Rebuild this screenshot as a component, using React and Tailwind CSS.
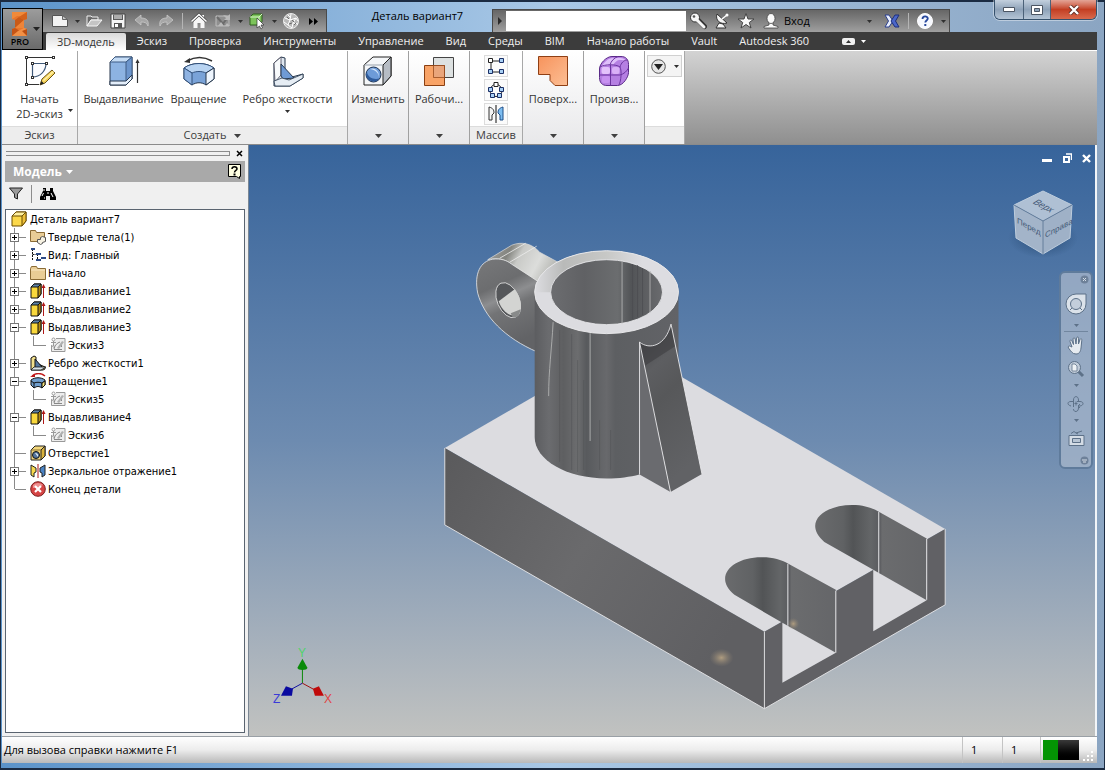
import { useState } from "react";

const Caret = ({ className = "fill-[#404040]" }) => (
  <svg width="7" height="4" viewBox="0 0 7 4" className={`shrink-0 ${className}`}>
    <path d="M0 0h7L3.5 4z" />
  </svg>
);

const SmallCaret = ({ className = "fill-[#303030]" }) => (
  <svg width="5" height="3" viewBox="0 0 5 3" className={`shrink-0 ${className}`}>
    <path d="M0 0h5L2.5 3z" />
  </svg>
);

/* ---------- application button ---------- */

const AppLogo = () => (
  <svg width="18" height="26" viewBox="0 0 18 26">
    <path d="M1 1h15v7l-3 1v8l3 1v7H1v-7l3-1V9L1 8z" fill="#e8762c" />
    <path d="M1 1h15l-6 4H6L1 8z" fill="#f08a3a" />
    <path d="M16 1v7l-3 1-5-3z" fill="#d4621c" />
    <path d="M4 9l4-3 5 3-9 8z" fill="#c95a18" />
    <path d="M13 9v8H4z" fill="#ee8438" />
    <path d="M1 25v-7l3-1 5 3z" fill="#c65516" />
    <path d="M16 25v-7l-3-1-6 3-6 5z" fill="#f29045" />
    <path d="M16 25v-7l-5 2z" fill="#bb4f12" />
  </svg>
);

/* ---------- quick access icons, 18 x 18 ---------- */

const NewIcon = () => (
  <svg width="18" height="18" viewBox="0 0 18 18">
    <path d="M1.500 3.500h10l5 4v7h-15z" fill="#f2f2f2" stroke="#555" />
    <path d="M11.500 3.500v4h5z" fill="#c9c9c9" stroke="#666" />
  </svg>
);
const OpenIcon = () => (
  <svg width="18" height="18" viewBox="0 0 18 18">
    <path d="M2 14V4h4l1 1h6v3H6z" fill="#6b6b6b" stroke="#f0f0f0" strokeLinejoin="round" />
    <path d="M2 14l4-6h11l-5 6z" fill="#c4c4c4" stroke="#f5f5f5" strokeLinejoin="round" />
  </svg>
);
const SaveIcon = () => (
  <svg width="18" height="18" viewBox="0 0 18 18">
    <path d="M2 2h14v14H2z" fill="#f5f5f5" stroke="#444" />
    <path d="M4 2.500h10v5.500H4z" fill="#5a5a5a" />
    <path d="M5 4h8M5 6h8" stroke="#fff" />
    <path d="M5 11h8v5H5z" fill="#555" />
    <path d="M6 12h3v3H6z" fill="#fff" />
  </svg>
);
const UndoIcon = () => (
  <svg width="18" height="18" viewBox="0 0 18 18">
    <path d="M2 8l6-5v3c6 0 8 3 7 8-1-3-3-4-7-4v3z" fill="#a6a6a6" stroke="#c9c9c9" strokeWidth=".8" />
  </svg>
);
const RedoIcon = () => (
  <svg width="18" height="18" viewBox="0 0 18 18">
    <path d="M16 8l-6-5v3c-6 0-8 3-7 8 1-3 3-4 7-4v3z" fill="#a6a6a6" stroke="#c9c9c9" strokeWidth=".8" />
  </svg>
);
const HomeIcon = () => (
  <svg width="18" height="18" viewBox="0 0 18 18">
    <path d="M12 3h2v4h-2z" fill="#fff" />
    <path d="M3.500 9v7h4v-5h3v5h4V9L9 4z" fill="#f7f7f7" />
    <path d="M1.500 9.500L9 2.500l7.500 7" fill="none" stroke="#444" strokeWidth="3" />
    <path d="M1.500 9.500L9 2.500l7.500 7" fill="none" stroke="#fff" strokeWidth="1.600" />
  </svg>
);
const UpdateIcon = () => (
  <svg width="18" height="18" viewBox="0 0 18 18">
    <path d="M2 4h13v10H2z" fill="#8f8f8f" stroke="#bdbdbd" />
    <path d="M3 5l7 8M14 5l-6 8" stroke="#6c6c6c" strokeWidth="2" />
    <path d="M9 3l3 3-2 2h6V2l-2 2z" fill="#b9b9b9" />
    <path d="M4 14l3-4 3 4zM11 14l2-3 3 3z" fill="#bbb" />
  </svg>
);
const SelectIcon = () => (
  <svg width="18" height="18" viewBox="0 0 18 18">
    <path d="M2 5l3-3h9v8l-3 3H2z" fill="#7cc35a" stroke="#2f5c1f" />
    <path d="M2 5h9v8M11 5l3-3" fill="none" stroke="#d8f5c8" />
    <path d="M9 6v10l2.500-2 1.500 3 1.500-1-1.500-3h3z" fill="#fff" stroke="#333" strokeWidth=".7" />
  </svg>
);
const MaterialIcon = () => (
  <svg width="18" height="18" viewBox="0 0 18 18">
    <circle cx="9" cy="9" r="7.500" fill="#b9b9b9" stroke="#ececec" />
    <path d="M3 6l5 2 1-6M8 8l-2 5 4 3M8 8l6-2M6 13l-4-3M10 16l1-5 5 1M11 11l3-5 2 3M6 3l3 3" fill="none" stroke="#fff" />
    <path d="M5 5l2 2M10 8l2 2M7 12l3-1M12 13l2-2" stroke="#6c6c6c" />
  </svg>
);

/* ---------- info center icons ---------- */

const KeyIcon = () => (
  <svg width="18" height="18" viewBox="0 0 18 18">
    <path d="M8.500 7.500l7 7" stroke="#333" strokeWidth="5" strokeLinecap="round" />
    <circle cx="6" cy="5.500" r="4.500" fill="#f6f6f6" stroke="#333" />
    <path d="M8 8l7 7" stroke="#f6f6f6" strokeWidth="3" strokeLinecap="round" />
    <circle cx="5" cy="4.500" r="1.300" fill="#555" />
  </svg>
);
const DishIcon = () => (
  <svg width="18" height="18" viewBox="0 0 18 18">
    <path d="M4 2c-2 6 3 11 10 9z" fill="#f6f6f6" stroke="#333" />
    <path d="M9 7l5-4" stroke="#fff" strokeWidth="1.500" />
    <circle cx="14" cy="3" r="1.500" fill="#fff" />
    <path d="M6 11l-3 5h10l-3-4z" fill="#f6f6f6" stroke="#333" />
  </svg>
);
const StarIcon = () => (
  <svg width="18" height="18" viewBox="0 0 18 18">
    <path d="M9 1.500l2 5.500h6l-4.700 3.500L14 16l-5-3.500L4 16l1.700-5.500L1 7h6z" fill="#fafafa" stroke="#444" />
  </svg>
);
const UserIcon = () => (
  <svg width="18" height="18" viewBox="0 0 18 18">
    <path d="M7 10h4v3l5 1.500V16H2v-1.500L7 13z" fill="#fafafa" stroke="#444" strokeWidth=".8" />
    <ellipse cx="9" cy="6.500" rx="4" ry="5" fill="#fafafa" stroke="#444" strokeWidth=".8" />
  </svg>
);
const ExchangeIcon = () => (
  <svg width="18" height="18" viewBox="0 0 18 18">
    <path d="M2 3h4l4 6-4 6H2l3.500-6z" fill="#e8eefc" stroke="#2b3f8f" />
    <path d="M16 3h-4L8 9l4 6h4l-3.500-6z" fill="#4a66c9" stroke="#1d2f7c" />
  </svg>
);
const HelpIcon = () => (
  <svg width="18" height="18" viewBox="0 0 18 18">
    <circle cx="9" cy="9" r="7.500" fill="#f7f9ff" stroke="#fff" />
    <path d="M6.500 7c0-3.500 5.300-3.300 5.300-.4 0 1.900-2.500 2-2.500 4" fill="none" stroke="#27489c" strokeWidth="1.800" />
    <path d="M8.300 12h2v2h-2z" fill="#27489c" />
  </svg>
);

/* ---------- ribbon icons, 32 x 32 ---------- */

const SketchIcon = () => (
  <svg width="32" height="32" viewBox="0 0 32 32">
    <path d="M2.500 2.500h27M2.500 2.500v27H15" fill="none" stroke="#333" />
    <path d="M8.500 22V8.500H22C22 16 16 22 8.500 22z" fill="#fbfcff" stroke="#3e5878" strokeWidth="1.200" />
    <path d="M1 1h3v3H1zM28 1h3v3h-3zM1 28h3v3H1zM7 7h3v3H7zM21 7h3v3h-3zM7 21h3v3H7z" fill="#333" />
    <path d="M2 2h1v1H2zM29 2h1v1h-1zM2 29h1v1H2zM8 8h1v1H8zM22 8h1v1h-1zM8 22h1v1H8z" fill="#fff" />
    <path d="M16 30l2-6L28 15l3 3-10 10z" fill="#f5d35a" stroke="#6b5518" />
    <path d="M19.500 25.500l10-9" stroke="#fff0a8" strokeWidth="1.500" />
    <path d="M16 30l1.500-4 2.500 2.500z" fill="#222" />
  </svg>
);
const ExtrudeIcon = () => (
  <svg width="32" height="32" viewBox="0 0 32 32">
    <path d="M2 7l5-5h17v22l-6 6H2z" fill="#8db3e2" stroke="#26374d" strokeLinejoin="round" />
    <path d="M2 7l5-5h17l-6 5z" fill="#c5dcf5" stroke="#3e5d85" />
    <path d="M18 7v23l6-6V2z" fill="#6c95cc" stroke="#3e5d85" />
    <path d="M2 26h16l6-6v4l-6 6H2z" fill="#e4eefa" stroke="#26374d" strokeLinejoin="round" />
    <path d="M29.500 6v22" stroke="#333" strokeWidth="1.200" />
    <path d="M29.500 4l-2 4h4z" fill="#333" />
  </svg>
);
const RevolveIcon = () => (
  <svg width="32" height="32" viewBox="0 0 32 32">
    <path d="M4 6c8-4.500 17-4.500 25 0" fill="none" stroke="#333" strokeWidth="1.500" />
    <path d="M1 7l6-4v5z" fill="#333" />
    <path d="M1 13c8-6 22-6 30 0v11l-8 6c-4-3-10-3-14 0l-8-6z" fill="#7aa3d8" stroke="#26374d" strokeLinejoin="round" />
    <path d="M1 13c8-6 22-6 30 0l-8 5c-4-2-10-2-14 0z" fill="#b9d4f2" stroke="#33527d" />
    <path d="M23 18l8-5v11l-8 6z" fill="#eef5fd" stroke="#26374d" />
    <path d="M1 13l8 5v12l-8-6z" fill="#8fb3e2" stroke="#33527d" />
  </svg>
);
const RibIcon = () => (
  <svg width="32" height="32" viewBox="0 0 32 32">
    <path d="M2 8l7-6 4 1v15l7 4 11-3v4l-13 8H2z" fill="#dfe7f0" stroke="#26374d" strokeLinejoin="round" />
    <path d="M2 8l7-6v18l-6 7z" fill="#f8fafc" stroke="#445" strokeWidth=".8" />
    <path d="M9 9l13 14-11 1-2-3z" fill="#6f9bd6" stroke="#26374d" />
    <path d="M2 26l8-3 7 2 14-6v4l-13 8H3z" fill="#e6edf4" stroke="#26374d" strokeWidth=".8" />
  </svg>
);
const ModifyIcon = () => (
  <svg width="32" height="32" viewBox="0 0 32 32">
    <path d="M2 10l9-8h18v19l-8 9H2z" fill="#f4f6f8" stroke="#222" strokeLinejoin="round" />
    <path d="M21 10l8-8v19l-8 9z" fill="#b6bcc4" stroke="#222" strokeLinejoin="round" />
    <path d="M2 10h19" stroke="#9aa3ad" />
    <circle cx="11.500" cy="19.500" r="7.500" fill="#6d9bd8" stroke="#1e3250" />
    <path d="M5 17c1 6 7 8 12.500 6.500A7.500 7.500 0 0 1 4 19z" fill="#2f5c9c" />
    <path d="M8 14a6.500 6.500 0 0 1 8 9c2-4-2-8-8-9z" fill="#cfe3fa" />
  </svg>
);
const WorkPlaneIcon = () => (
  <svg width="32" height="32" viewBox="0 0 32 32">
    <path d="M10.500 2.500h20v20h-20z" fill="#dde1e1" stroke="#444" />
    <path d="M1.500 10.500h20v20h-20z" fill="#f8a367" stroke="#8a3f12" />
    <path d="M10.500 10.500h11v12h-11z" fill="#e9a57b" stroke="#8a3f12" strokeOpacity=".7" />
  </svg>
);
const SurfaceIcon = () => (
  <svg width="32" height="32" viewBox="0 0 32 32">
    <defs>
      <linearGradient id="surf" x2="1" y2="1">
        <stop stopColor="#f7935c" />
        <stop offset="1" stopColor="#fcbf95" />
      </linearGradient>
    </defs>
    <path d="M1.500 1.500h29v29H18l-5-5v-6H1.500z" fill="url(#surf)" stroke="#8f3f14" />
  </svg>
);
const FreeformIcon = () => (
  <svg width="32" height="32" viewBox="0 0 32 32">
    <path d="M1.500 14C1.500 9 8 1.500 14 1.500h9c5 0 7.500 3 7.500 8v8c0 4-5 13-11 13H9c-5 0-7.500-3-7.500-8z" fill="#b57fe2" stroke="#5a2b87" />
    <path d="M3 13c2-5 7-10 12-10h7c3 0 5 1 6 3-2-1-4-1-6-1-3 0-5 2-7 5-4 0-9 0-12 3z" fill="#dfc0fa" />
    <rect x="3.500" y="12" width="8.500" height="7" rx="2" fill="#e3c2fb" />
    <rect x="14" y="12" width="7.500" height="7" rx="2" fill="#d9b0f7" />
    <rect x="4" y="21" width="8" height="7" rx="2" fill="#c791f0" />
    <path d="M2 12c5-3 16-3 20 0 2 4 1 14-1 18M12.500 10v20.500M2 20h20c4-1 7-4 8.500-7M12 10c1-4 4-7 8-8.500M22 12c1-4 4-7 7-7" fill="none" stroke="#6d35a0" />
  </svg>
);

/* ---------- pattern icons, 20 x 20 ---------- */

const RectPatternIcon = () => (
  <svg width="20" height="20" viewBox="0 0 20 20">
    <path d="M5 5h11M5 5v11h11" fill="none" stroke="#222" />
    <path d="M2.500 2.500h4v4h-4z" fill="#fff" stroke="#222" />
    <path d="M13.500 2.500h4v4h-4zM2.500 13.500h4v4h-4zM13.500 13.500h4v4h-4z" fill="#a8d0f5" stroke="#1b2f66" />
  </svg>
);
const CircPatternIcon = () => (
  <svg width="20" height="20" viewBox="0 0 20 20">
    <circle cx="10" cy="10.500" r="6" fill="none" stroke="#222" />
    <path d="M8 2.500h4v4H8z" fill="#fff" stroke="#222" />
    <path d="M2.500 7.500h4v4h-4zM13.500 7.500h4v4h-4zM4.500 13.500h4v4h-4zM11.500 13.500h4v4h-4z" fill="#a8d0f5" stroke="#1b2f66" />
  </svg>
);
const MirrorIcon = () => (
  <svg width="20" height="20" viewBox="0 0 20 20">
    <path d="M3 3c4 1 5 3 5 6l-2 2v5H3z" fill="#f4f4f4" stroke="#333" />
    <path d="M17 3c-4 1-5 3-5 6l2 2v5h3z" fill="#7dbdf0" stroke="#1f4e88" />
    <path d="M10 1v18" stroke="#111" />
  </svg>
);

/* ---------- browser tree icons, 16 x 16 ---------- */

const PartIcon = () => (
  <svg width="16" height="16" viewBox="0 0 16 16">
    <path d="M1 5l4-4h10v9l-4 5H1z" fill="#fbd84a" stroke="#6b4d00" strokeLinejoin="round" />
    <path d="M1 5l4-4h10l-4 4z" fill="#fff0a0" stroke="#6b4d00" strokeLinejoin="round" />
    <path d="M11 5l4-4v9l-4 5z" fill="#eec03a" stroke="#6b4d00" strokeLinejoin="round" />
  </svg>
);
const BodiesIcon = () => (
  <svg width="16" height="16" viewBox="0 0 16 16">
    <path d="M.5 12.500v-11h5l1 2h8v9z" fill="#e9cd96" stroke="#8a6b35" />
    <path d="M7.500 13.500v-3h3v-2l2-1 3 1v4l-3 1v1l-2 1z" fill="#f6f1e2" stroke="#555" />
  </svg>
);
const ViewIcon = () => (
  <svg width="16" height="16" viewBox="0 0 16 16">
    <path d="M2.500 2v12M2.500 7.500H7M7.500 7v6h3" fill="none" stroke="#111" strokeDasharray="2 1" />
    <path d="M1 1h4v2H1zM6 6h5v2H6zM11 10h5v2h-5zM6 12h5v2H6z" fill="#2c4a86" />
  </svg>
);
const FolderIcon = () => (
  <svg width="16" height="16" viewBox="0 0 16 16">
    <path d="M.5 3.500l1-2h5l1 2h8v11H.5z" fill="#e9cd96" stroke="#8a6b35" />
    <path d="M1 5h14" stroke="#f9e8c2" />
  </svg>
);
const ExtrusionIcon = () => (
  <svg width="16" height="16" viewBox="0 0 16 16">
    <path d="M1 4l3-3h7v10l-3 4H1z" fill="#f9d83c" stroke="#111" strokeLinejoin="round" />
    <path d="M1 4l3-3h7L8 4z" fill="#5d84a8" stroke="#111" strokeLinejoin="round" />
    <path d="M8 4l3-3v10l-3 4z" fill="#b48c12" stroke="#111" strokeLinejoin="round" />
    <path d="M13.500 4v11" stroke="#b01818" />
    <path d="M13.500 1l-2 4h4z" fill="#b01818" />
  </svg>
);
const RibSmallIcon = () => (
  <svg width="16" height="16" viewBox="0 0 16 16">
    <path d="M1 3l3-2 2 1v6l9 4v2l-2 1H1z" fill="#f2e08c" stroke="#111" strokeLinejoin="round" />
    <path d="M5 4l8 9H5z" fill="#54769e" stroke="#111" />
    <path d="M1 15l3-3h12l-5 3z" fill="#d7e3ea" stroke="#111" strokeWidth=".8" />
  </svg>
);
const RevolutionIcon = () => (
  <svg width="16" height="16" viewBox="0 0 16 16">
    <path d="M2 3c4-3 9-3 13 0" fill="none" stroke="#c01818" strokeWidth="1.500" />
    <path d="M0 4l5-3v3z" fill="#c01818" />
    <path d="M1 7c4-3 10-3 14 0v5l-3 3c-3-2-5-2-8 0l-3-3z" fill="#6f9dcc" stroke="#111" />
    <path d="M1 8l3 2c3-1 5-1 8 0l3-2M12 10v5M4 10v5" fill="none" stroke="#111" />
    <path d="M12 10l3-2v4l-3 3z" fill="#f4e27a" stroke="#111" />
  </svg>
);
const HoleIcon = () => (
  <svg width="16" height="16" viewBox="0 0 16 16">
    <path d="M1 5l4-4h10v10l-4 4H1z" fill="#f3d77b" stroke="#222" strokeLinejoin="round" />
    <path d="M11 5l4-4v10l-4 4z" fill="#d9b23c" stroke="#222" strokeLinejoin="round" />
    <path d="M1 5h10" stroke="#8d7434" />
    <circle cx="6" cy="10" r="3.500" fill="#54769e" stroke="#111" />
    <path d="M5 8a3 3 0 0 1 3 4z" fill="#e5eff6" />
  </svg>
);
const MirrorSmallIcon = () => (
  <svg width="16" height="16" viewBox="0 0 16 16">
    <path d="M1 2l5 3v4l-2 1v4l-3-2z" fill="#f7d94d" stroke="#222" />
    <path d="M15 2l-5 3v4l2 1v4l3-2z" fill="#4b83c4" stroke="#222" />
    <path d="M8 1v14" stroke="#b01818" />
  </svg>
);
const EndIcon = () => (
  <svg width="16" height="16" viewBox="0 0 16 16">
    <circle cx="8" cy="8" r="7.300" fill="#d64545" stroke="#7c1f1f" />
    <path d="M3 4a7 7 0 0 1 10 0c-3 2-7 3-10 3z" fill="#ee9090" />
    <path d="M5 5l6 6M11 5l-6 6" stroke="#fff" strokeWidth="2.200" />
  </svg>
);
const SketchSmallIcon = () => (
  <svg width="16" height="16" viewBox="0 0 16 16">
    <path d="M6 1.500h9v13H1.500V9" fill="#ededed" stroke="#999" />
    <path d="M4 12.500h8M11.500 6v4M4 12c1-4 3-6 6-7" fill="none" stroke="#888" />
    <circle cx="3.500" cy="2.500" r="1.500" fill="#fff" stroke="#999" />
    <path d="M3.500 4v5M1 5.500h5M1 8l2.500 2L6 8" fill="none" stroke="#999" />
    <path d="M7 11l5-7 2 1-5 7z" fill="#b0b0b0" />
  </svg>
);

/* ---------- data ---------- */

const tabs = [
  "3D-модель", "Эскиз", "Проверка", "Инструменты", "Управление", "Вид",
  "Среды", "BIM", "Начало работы", "Vault", "Autodesk 360",
];

const treeItems = [
  { label: "Твердые тела(1)", icon: BodiesIcon, toggle: "+" },
  { label: "Вид: Главный", icon: ViewIcon, toggle: "+" },
  { label: "Начало", icon: FolderIcon, toggle: "+" },
  { label: "Выдавливание1", icon: ExtrusionIcon, toggle: "+" },
  { label: "Выдавливание2", icon: ExtrusionIcon, toggle: "+" },
  { label: "Выдавливание3", icon: ExtrusionIcon, toggle: "-", child: "Эскиз3" },
  { label: "Ребро жесткости1", icon: RibSmallIcon, toggle: "+" },
  { label: "Вращение1", icon: RevolutionIcon, toggle: "-", child: "Эскиз5" },
  { label: "Выдавливание4", icon: ExtrusionIcon, toggle: "-", child: "Эскиз6" },
  { label: "Отверстие1", icon: HoleIcon },
  { label: "Зеркальное отражение1", icon: MirrorSmallIcon, toggle: "+" },
  { label: "Конец детали", icon: EndIcon, last: true },
];

/* ---------- title bar ---------- */

const ToolButton = ({ label, children }) => (
  <button type="button" aria-label={label} className="flex h-5 w-6 shrink-0 items-center justify-center">
    {children}
  </button>
);

const QuickAccess = () => (
  <div className="flex h-[23px] w-[284px] shrink-0 items-center self-end border-t border-r border-[#4a4a4a] bg-gradient-to-b from-[#666] to-[#a0a0a0] pl-[5px]">
    <ToolButton label="Создать"><NewIcon /></ToolButton>
    <div className="flex w-[10px] justify-center"><SmallCaret /></div>
    <ToolButton label="Открыть"><OpenIcon /></ToolButton>
    <ToolButton label="Сохранить"><SaveIcon /></ToolButton>
    <ToolButton label="Отменить"><UndoIcon /></ToolButton>
    <ToolButton label="Вернуть"><RedoIcon /></ToolButton>
    <div className="mx-1 h-4 w-px bg-[#b5b5b5]" />
    <ToolButton label="Домой"><HomeIcon /></ToolButton>
    <ToolButton label="Обновить"><UpdateIcon /></ToolButton>
    <div className="flex w-[10px] justify-center"><SmallCaret /></div>
    <ToolButton label="Выбор"><SelectIcon /></ToolButton>
    <div className="flex w-[10px] justify-center"><SmallCaret /></div>
    <ToolButton label="Материал"><MaterialIcon /></ToolButton>
    <button type="button" aria-label="Ещё" className="flex h-5 w-5 items-center justify-center">
      <svg width="9" height="7" viewBox="0 0 9 7" className="fill-black">
        <path d="M0 0l4 3.500L0 7zM5 0l4 3.500L5 7z" />
      </svg>
    </button>
  </div>
);

const InfoCenter = () => (
  <div className="flex h-[23px] w-[458px] shrink-0 items-center self-end border-t border-r border-[#4a4a4a] bg-gradient-to-b from-[#666] to-[#a0a0a0]">
    <button type="button" aria-label="Свернуть" className="flex h-full w-3.5 items-center justify-center border-l border-[#4a4a4a]">
      <svg width="4" height="8" viewBox="0 0 4 8" className="fill-[#2b2b2b]"><path d="M0 0l4 4-4 4z" /></svg>
    </button>
    <input type="text" aria-label="Поиск" className="h-5 w-[180px] bg-white px-1 text-[11px] outline-none" />
    <ToolButton label="Ключ"><KeyIcon /></ToolButton>
    <ToolButton label="Связь"><DishIcon /></ToolButton>
    <ToolButton label="Избранное"><StarIcon /></ToolButton>
    <button type="button" className="flex items-center gap-1 pl-1 text-[11px] text-black">
      <UserIcon />
      Вход
    </button>
    <div className="ml-auto flex items-center">
      <SmallCaret />
      <div className="w-2" />
      <ToolButton label="Exchange"><ExchangeIcon /></ToolButton>
      <div className="mx-1 h-4 w-px bg-[#b5b5b5]" />
      <ToolButton label="Справка"><HelpIcon /></ToolButton>
      <div className="flex w-3 justify-center"><SmallCaret /></div>
    </div>
  </div>
);

const WindowButtons = () => (
  <div className="flex h-5 shrink-0 self-start overflow-hidden rounded-b-md border border-t-0 border-[#35506b] shadow-[0_0_0_1px_rgba(255,255,255,0.4)]">
    <button type="button" aria-label="Свернуть окно" className="flex w-7 items-center justify-center bg-gradient-to-b from-[#c3d0de] via-[#8ea2b8] to-[#b5c5d6]">
      <svg width="12" height="5" viewBox="0 0 12 5"><path d="M.5 .5h11v4H.5z" fill="#fff" stroke="#4b5563" /></svg>
    </button>
    <button type="button" aria-label="Развернуть окно" className="flex w-7 items-center justify-center border-x border-[#4b6178] bg-gradient-to-b from-[#c3d0de] via-[#8ea2b8] to-[#b5c5d6]">
      <svg width="12" height="10" viewBox="0 0 12 10">
        <path d="M.5 .5h11v9H.5z" fill="#fff" stroke="#4b5563" />
        <path d="M3.500 3.500h5v3h-5z" fill="#8ea2b8" stroke="#4b5563" />
      </svg>
    </button>
    <button type="button" aria-label="Закрыть окно" className="flex w-[45px] items-center justify-center bg-gradient-to-b from-[#e3a496] via-[#c33e22] to-[#d9694c]">
      <svg width="12" height="10" viewBox="0 0 12 10">
        <path d="M2 1l8 8M10 1L2 9" stroke="#5b2a22" strokeWidth="4" />
        <path d="M2 1l8 8M10 1L2 9" stroke="#fff" strokeWidth="2.400" />
      </svg>
    </button>
  </div>
);

const Header = ({ active, setActive }) => (
  <header className="flex h-[50px] shrink-0">
    <button type="button" className="mt-2 ml-px flex w-[41px] shrink-0 items-center border border-black bg-gradient-to-b from-[#9c9c9c] to-[#6b6b6b]">
      <span className="flex w-[30px] flex-col items-center pl-1">
        <AppLogo />
        <span className="text-[9px] leading-[10px] font-semibold text-black">PRO</span>
      </span>
      <Caret className="fill-[#222]" />
    </button>
    <div className="flex min-w-0 flex-1 flex-col">
      <div className="flex h-8 items-stretch">
        <QuickAccess />
        <div className="flex-1 truncate pt-[7px] pl-4 text-center text-[11px] leading-[18px] text-black">Деталь вариант7</div>
        <InfoCenter />
        <div className="w-11 shrink-0" />
        <WindowButtons />
        <div className="w-[7px] shrink-0" />
      </div>
      <div className="mr-[7px] flex h-[18px] items-center bg-[#3c3c3c] pl-[3px]">
        <nav className="flex h-full">
          {tabs.map((tab) => (
            <button
              key={tab}
              type="button"
              onClick={() => setActive(tab)}
              className={
                tab === active
                  ? "mt-px rounded-t-xs bg-gradient-to-b from-[#d9d9d9] to-white px-[11px] text-[11px] leading-4 whitespace-nowrap text-[#333]"
                  : "px-[11px] text-[11px] leading-[18px] whitespace-nowrap text-[#f0f0f0]"
              }
            >
              {tab}
            </button>
          ))}
        </nav>
        <button type="button" aria-label="Свернуть ленту" className="ml-[22px] flex items-center gap-1.5">
          <svg width="13" height="7" viewBox="0 0 13 7">
            <rect width="13" height="7" rx="2" fill="#f0f0f0" />
            <path d="M4 5h5L6.500 2z" fill="#333" />
          </svg>
          <SmallCaret className="fill-white" />
        </button>
      </div>
    </div>
  </header>
);

/* ---------- ribbon ---------- */

const RibbonPanel = ({ title, className, children }) => (
  <section className={`flex shrink-0 flex-col border-r border-[#a8a8a8] bg-white ${className}`}>
    <div className="flex flex-1 justify-center pt-1">{children}</div>
    <div className="flex h-[18px] items-center justify-center gap-2 border-t border-[#dcdcdc] bg-[#ededed] text-[11px] text-[#3c3c3c]">{title}</div>
  </section>
);

const RibbonButton = ({ icon: Icon, label, caret, className }) => (
  <button type="button" className={`flex flex-col items-center gap-1 text-[11px] leading-[15px] whitespace-nowrap text-[#333] ${className}`}>
    <Icon />
    <span>{label}</span>
    {caret && <SmallCaret />}
  </button>
);

const CollapsedPanel = ({ icon, label }) => (
  <section className="flex w-[61px] shrink-0 flex-col items-center justify-between border-r border-[#a0a0a0] bg-gradient-to-b from-white to-[#e8e8ea] pt-1 pb-1.5">
    <RibbonButton icon={icon} label={label} />
    <Caret />
  </section>
);

const Ribbon = () => (
  <div className="mr-[7px] ml-px flex h-[95px] shrink-0 border-t border-b border-[#8b8b8b] border-t-white bg-gradient-to-b from-[#d3d3d3] to-[#8f8f8f]">
    <RibbonPanel title="Эскиз" className="w-[76px]">
      <button type="button" className="relative flex w-full flex-col items-center gap-1 text-[11px] leading-[15px] text-[#333]">
        <SketchIcon />
        <span>Начать<br />2D-эскиз</span>
        <span className="absolute right-1 bottom-3.5"><SmallCaret /></span>
      </button>
    </RibbonPanel>
    <RibbonPanel title={<>Создать <Caret /></>} className="w-[270px]">
      <RibbonButton icon={ExtrudeIcon} label="Выдавливание" className="w-[86px]" />
      <RibbonButton icon={RevolveIcon} label="Вращение" className="w-16" />
      <RibbonButton icon={RibIcon} label="Ребро жесткости" caret className="w-[114px]" />
    </RibbonPanel>
    <CollapsedPanel icon={ModifyIcon} label="Изменить" />
    <CollapsedPanel icon={WorkPlaneIcon} label="Рабочи..." />
    <RibbonPanel title="Массив" className="w-[53px]">
      <div className="flex flex-col gap-0.5">
        {[RectPatternIcon, CircPatternIcon, MirrorIcon].map((Icon, i) => (
          <button key={i} type="button" aria-label={`Массив ${i + 1}`} className="flex h-[22px] w-6 items-center justify-center border border-[#dcdcdc] bg-[#fbfbfb]">
            <Icon />
          </button>
        ))}
      </div>
    </RibbonPanel>
    <CollapsedPanel icon={SurfaceIcon} label="Поверх..." />
    <CollapsedPanel icon={FreeformIcon} label="Произв..." />
    <RibbonPanel title="" className="w-10">
      <button type="button" aria-label="Параметры" className="flex h-[22px] w-[35px] items-center justify-center gap-2 border border-[#d0d0d0] bg-[#f4f4f4]">
        <svg width="15" height="15" viewBox="0 0 15 15">
          <circle cx="7.500" cy="7.500" r="6.800" fill="#e6e6e6" stroke="#555" />
          <path d="M3 5h9l-4.500 6z" fill="#222" />
        </svg>
        <SmallCaret />
      </button>
    </RibbonPanel>
  </div>
);

/* ---------- model browser ---------- */

const Branch = ({ toggle, last }) => (
  <svg width="24" height="18" viewBox="0 0 24 18" className="shrink-0" shapeRendering="crispEdges">
    <path d={last ? "M8.500 0v9" : "M8.500 0v18"} stroke="#8a8a8a" fill="none" />
    <path d="M8.500 9.500h11" stroke="#8a8a8a" />
    {toggle && <path d="M4.500 5.500h8v8h-8z" fill="#fff" stroke="#777" />}
    {toggle && <path d="M6 9.500h5" stroke="#000" />}
    {toggle === "+" && <path d="M8.500 7v5" stroke="#000" />}
  </svg>
);

const ChildBranch = () => (
  <svg width="44" height="18" viewBox="0 0 44 18" className="shrink-0" shapeRendering="crispEdges">
    <path d="M8.500 0v18M27.500 0v9.500h12" fill="none" stroke="#8a8a8a" />
  </svg>
);

const ModelBrowser = () => (
  <aside className="flex w-[247px] shrink-0 flex-col border-r border-[#7b8794] bg-[#f0f0f0] px-[3px] pb-[3px]">
    <div className="flex h-4 items-center gap-1.5 pl-px">
      <div className="h-[5px] flex-1 border border-l-0 border-[#8c8c8c]" />
      <button type="button" aria-label="Закрыть панель" className="mr-0.5">
        <svg width="7" height="7" viewBox="0 0 7 7"><path d="M1 1l5 5M6 1L1 6" stroke="#000" strokeWidth="1.500" /></svg>
      </button>
    </div>
    <div className="flex h-[21px] shrink-0 items-center justify-between bg-[#a9a9a9] pr-1 pl-2">
      <button type="button" className="flex items-center gap-1 text-[12px] font-bold text-white">
        Модель <Caret className="fill-white" />
      </button>
      <button type="button" aria-label="Помощь по панели">
        <svg width="13" height="15" viewBox="0 0 13 15">
          <path d="M.5 .5h12v12h-1v2l-3-2h-8z" fill="#ffffe1" stroke="#000" />
          <path d="M4 5c0-3 5-3 5 0 0 1.500-2.500 1.500-2.500 3.500" fill="none" stroke="#000" strokeWidth="1.500" />
          <path d="M5.500 9.500h2v2h-2z" />
        </svg>
      </button>
    </div>
    <div className="flex h-[27px] shrink-0 items-center gap-2 pb-1 pl-1">
      <button type="button" aria-label="Фильтр">
        <svg width="14" height="13" viewBox="0 0 14 13">
          <path d="M.5 1h13L8.500 7v5l-3-1.500V7z" fill="#9a9a9a" stroke="#222" />
        </svg>
      </button>
      <div className="h-[18px] w-px bg-[#8c8c8c]" />
      <button type="button" aria-label="Найти">
        <svg width="16" height="14" viewBox="0 0 16 14">
          <path d="M3 1h3v3h4V1h3v3l3 6v3h-6V9H6v4H0v-3l3-6z" fill="#000" />
          <path d="M2 9l1.500-3M4 11h1M11 6l2 4M7 6h2M4 2v2" stroke="#fff" />
        </svg>
      </button>
    </div>
    <div className="flex-1 overflow-hidden border border-[#5a6470] bg-white font-['DejaVu_Sans_Condensed','Noto_Sans',sans-serif] text-[11px] leading-[18px] text-black">
      <div className="flex h-[18px] items-center gap-[3px] pl-[5px]">
        <PartIcon />
        <span className="pt-px">Деталь вариант7</span>
      </div>
      <ul>
        {treeItems.map((item) => (
          <li key={item.label}>
            <div className="flex h-[18px] items-center whitespace-nowrap">
              <Branch toggle={item.toggle} last={item.last} />
              <item.icon />
              <span className="pt-px pl-0.5">{item.label}</span>
            </div>
            {item.child && (
              <div className="flex h-[18px] items-center whitespace-nowrap">
                <ChildBranch />
                <SketchSmallIcon />
                <span className="pt-px pl-0.5">{item.child}</span>
              </div>
            )}
          </li>
        ))}
      </ul>
    </div>
  </aside>
);

/* ---------- 3D scene ---------- */

const Model = () => (
  <svg viewBox="249 145 847 591" className="block h-full w-full">
    <defs>
      <linearGradient id="tube" x2="1">
        <stop stopColor="#5c5d60" />
        <stop offset=".1" stopColor="#6b6c6f" />
        <stop offset=".2" stopColor="#5e5f61" />
        <stop offset=".3" stopColor="#6c6d6f" />
        <stop offset=".36" stopColor="#585a5d" />
        <stop offset=".5" stopColor="#68696c" />
        <stop offset=".56" stopColor="#5d5f62" />
        <stop offset="1" stopColor="#626367" />
      </linearGradient>
      <linearGradient id="bore" x2="1">
        <stop stopColor="#6c6d70" />
        <stop offset=".3" stopColor="#606164" />
        <stop offset=".6" stopColor="#6b6d6f" />
        <stop offset=".72" stopColor="#525457" />
        <stop offset="1" stopColor="#6a6b6e" />
      </linearGradient>
      <linearGradient id="slot" x2="1">
        <stop stopColor="#6a6b6d" />
        <stop offset=".25" stopColor="#606264" />
        <stop offset=".34" stopColor="#525456" />
        <stop offset=".5" stopColor="#646668" />
        <stop offset=".58" stopColor="#5a5b5f" />
        <stop offset=".6" stopColor="#6b6c6e" />
        <stop offset="1" stopColor="#656669" />
      </linearGradient>
      <linearGradient id="side" x2="1" y2=".5">
        <stop stopColor="#5a5a5c" />
        <stop offset=".5" stopColor="#6a6a6c" />
        <stop offset="1" stopColor="#5f5f62" />
      </linearGradient>
      <linearGradient id="lug" x2=".3" y2="1">
        <stop stopColor="#77787a" />
        <stop offset=".35" stopColor="#6c6d6f" />
        <stop offset=".5" stopColor="#8d8e90" />
        <stop offset=".62" stopColor="#737476" />
        <stop offset="1" stopColor="#626366" />
      </linearGradient>
      <linearGradient id="lugTop" x2="1" y2=".4">
        <stop stopColor="#a4a5a3" />
        <stop offset=".3" stopColor="#83847f" />
        <stop offset=".45" stopColor="#c9cac7" />
        <stop offset=".7" stopColor="#dcdddb" />
        <stop offset="1" stopColor="#a9aaa5" />
      </linearGradient>
      <linearGradient id="rim" x2="1">
        <stop stopColor="#dddde1" />
        <stop offset=".2" stopColor="#b9bab9" />
        <stop offset=".5" stopColor="#c7c8c6" />
        <stop offset=".75" stopColor="#dddde1" />
      </linearGradient>
      <linearGradient id="ribFace" x2=".35" y2="1">
        <stop stopColor="#414245" />
        <stop offset=".3" stopColor="#5d5e61" />
        <stop offset=".5" stopColor="#57585a" />
        <stop offset="1" stopColor="#616265" />
      </linearGradient>
      <radialGradient id="glow">
        <stop stopColor="#b09d80" />
        <stop offset="1" stopColor="#8a8072" stopOpacity="0" />
      </radialGradient>
    </defs>

    {/* base plate */}
    <path d="M445 448L625 344 946 529 765 632z" fill="#dcdce0" />
    <path d="M445 448L765 632V709L445 525z" fill="url(#side)" />
    <path d="M765 632L946 529V605L765 709z" fill="#616165" />
    <ellipse cx="722" cy="658" rx="12" ry="9" fill="url(#glow)" />

    {/* slots */}
    <path d="M783 623L735 595C713 577 733 557 763 557.500 774 557.500 782 560 789 564L836.500 590V653L783 683z" fill="url(#slot)" />
    <path d="M783 623L836.500 653 783 683z" fill="#dcdce0" />
    <path d="M874 570L825 542C803 523 824 505 853 505 865 505 873 508 880 512L927.500 538.500V600.500L874 631.500z" fill="url(#slot)" />
    <path d="M874 570L927.500 600.500 874 631.500z" fill="#dcdce0" />
    <ellipse cx="794" cy="624" rx="6" ry="6" fill="url(#glow)" />
    <path d="M788.500 564v62M879.500 512v61M836.500 591v62M927.500 539v61" fill="none" stroke="#e8e8ea" />
    <path d="M445 525V448M765 709V632M946 529v76L765 709 445 525" fill="none" stroke="#e8e8ea" strokeWidth=".9" />

    {/* lug */}
    <path d="M488 259.500L512 245C522 241 532 243 540 252L562 264 552 300 536 282 512 264C505 259 497 257 488 259.500z" fill="url(#lugTop)" stroke="#dcdcdc" strokeWidth=".7" />
    <path d="M510 262l27-16M500 258l26-15" stroke="#eee" strokeWidth=".8" />
    <path d="M538 352C505 338 484 316 478 293 474 273 481 261 493 259 501 258 507 260 512 264L538 281z" fill="url(#lug)" stroke="#e8e8e8" strokeWidth=".8" />
    <ellipse cx="508.500" cy="300" rx="11" ry="18.500" transform="rotate(-23 508.500 300)" fill="#55575a" stroke="#e0e0e0" strokeWidth=".8" />
    <path d="M499 301l16-12c5 6 7 14 6 20l-6 6c-6 1-13-5-16-14z" fill="#d3d4d2" />
    <path d="M511 313l10-4c-1 6-4 9-8 8z" fill="#888a8a" />

    {/* boss */}
    <path d="M535 292V437C535 460 567 478.500 607 478.500 620 478.500 630 477 640 474.500L679 380V292z" fill="url(#tube)" />
    <path d="M553.500 322C552 350 549 370 549 396M590.500 333v108" fill="none" stroke="#a9aaaa" />
    <path d="M560 330v132M572 334v136M578 360v112M584 380v90M600 420v50M611 430v40" stroke="#515356" strokeWidth=".5" />
    <ellipse cx="607" cy="292" rx="72" ry="41.500" fill="#dcdce0" />
    <path d="M535 292a72 41.500 0 0 1 144 0H663a56 32.500 0 0 0-112 0z" fill="url(#rim)" />
    <ellipse cx="607" cy="292" rx="72" ry="41.500" fill="none" stroke="#e6e6e8" />
    <ellipse cx="607" cy="292" rx="56" ry="32.500" fill="url(#bore)" stroke="#eeeef0" strokeWidth=".8" />
    <path d="M622.500 261v62M650.500 271v41" stroke="#a9aaaa" />
    <path d="M633 264v55M638 265v52M643 268v47" stroke="#4b4d50" strokeWidth=".8" />

    {/* rib */}
    <path d="M640 341L671 492 640 474.500z" fill="#6a6b6f" />
    <path d="M640 342C650 350 666 346 671.500 324L702.500 474 671 492z" fill="url(#ribFace)" />
    <path d="M640 342C650 350 666 346 671.500 324L676 346 645 366z" fill="#3d3e41" fillOpacity=".6" />
    <path d="M640 474.500V342C650 350 666 346 671.500 324L702.500 474M640 342L671 492" fill="none" stroke="#e8e8ea" strokeWidth=".9" />

    {/* axis triad */}
    <g className="font-['Liberation_Sans',sans-serif] text-[12px]">
      <path d="M302.500 683.500V668" stroke="#0a8a0a" />
      <path d="M302.500 659l5 9c0 3-10 3-10 0z" fill="#0a8a0a" />
      <path d="M302.500 683.500l-11 6" stroke="#1010a0" />
      <path d="M281 696l5-9.500 7 2.500-1 7z" fill="#0a0aa0" />
      <path d="M302.500 683.500l11 6" stroke="#a01010" />
      <path d="M324 696l-5-9.500-6 2.500 2 7z" fill="#c00a0a" />
      <text x="298" y="657" fill="#4fd36a">Y</text>
      <text x="273" y="703" fill="#3a3ad8">Z</text>
      <text x="324" y="703" fill="#e04545">X</text>
    </g>
  </svg>
);

const ViewCube = () => (
  <svg width="72" height="76" viewBox="0 0 72 76" className="font-['Liberation_Sans',sans-serif]">
    <defs>
      <radialGradient id="cubeShade">
        <stop stopColor="#22446b" stopOpacity=".8" />
        <stop offset="1" stopColor="#22446b" stopOpacity="0" />
      </radialGradient>
    </defs>
    <ellipse cx="36" cy="53" rx="35" ry="20" fill="url(#cubeShade)" />
    <path d="M36 6L65 20 36 36 7 20z" fill="#afc0d4" />
    <path d="M7 20L36 36V69L9 53z" fill="#a3b4c9" />
    <path d="M65 20L36 36V69L63 53z" fill="#9fb1c7" />
    <path d="M36 6L65 20 63 53 36 69 9 53 7 20z" fill="none" stroke="#becddd" />
    <path d="M7 20l29 16 29-16M36 36v33" fill="none" stroke="#5f7896" strokeWidth=".9" />
    <g fill="#465b78">
      <text transform="translate(25 18) rotate(28) skewX(-30)" fontSize="9">Верх</text>
      <text transform="translate(10 38) skewY(28)" fontSize="8">Перед</text>
      <text transform="translate(38 53) skewY(-28)" fontSize="8">Справа</text>
    </g>
  </svg>
);

const NavBar = () => (
  <div className="flex h-[198px] w-[34px] flex-col items-center rounded-md border-2 border-[#5f7b9b] bg-[#a4b4c9]/80 text-[#5d7188]">
    <button type="button" aria-label="Закрыть" className="mt-0.5 self-end pr-0.5">
      <svg width="9" height="9" viewBox="0 0 9 9"><circle cx="4.500" cy="4.500" r="4" fill="#6e8199" /><path d="M3 3l3 3M6 3L3 6" stroke="#d5dde6" /></svg>
    </button>
    <button type="button" aria-label="Штурвал" className="mt-2">
      <svg width="24" height="24" viewBox="0 0 24 24" fill="none" stroke="currentColor">
        <path d="M12 2h10v10A10 10 0 1 1 12 2z" fill="#dbe2ea" />
        <path d="M6 18l3-3M18 18l-3-3" />
        <circle cx="12" cy="12" r="5.500" fill="#c3cedb" />
      </svg>
    </button>
    <SmallCaret className="mt-2 fill-[#5d7188]" />
    <div className="mt-1 h-px w-6 bg-[#71869f]" />
    <button type="button" aria-label="Панорама" className="mt-1">
      <svg width="18" height="20" viewBox="0 0 18 20">
        <path d="M5 11L3 5.500c-.4-1.500 1.300-2 2-.5l1.500 3.500L6 3c0-1.500 2-1.600 2.200 0L9 8l.6-6c.2-1.400 2-1.300 2 .2L11.500 8l1.500-4.500c.6-1.300 2.200-.7 1.800.7L14 12c-.5 4-2 6-5 6-4 0-5-3-7.500-6-1-1.600.7-2.600 2-1.500z" fill="#e6ebf0" stroke="#5d7188" />
      </svg>
    </button>
    <button type="button" aria-label="Зум" className="mt-1">
      <svg width="18" height="18" viewBox="0 0 18 18">
        <path d="M11 11l5 5" stroke="#5d7188" strokeWidth="3" />
        <circle cx="7.500" cy="7.500" r="6" fill="#c3cedb" stroke="#5d7188" />
        <path d="M5 4h3l2 2v5H5z" fill="#eef2f5" stroke="#5d7188" strokeWidth=".8" />
      </svg>
    </button>
    <SmallCaret className="mt-1.5 fill-[#5d7188]" />
    <button type="button" aria-label="Орбита" className="mt-2">
      <svg width="18" height="18" viewBox="0 0 18 18" fill="none" stroke="currentColor">
        <path d="M6.500 12V5c0-4.500 5-4.500 5 0v1M11.500 11v2c0 4.500-5 4.500-5 1M4 11C0 10 0 6.500 4 6.500h3M10 6.500h3c4 0 4 4 0 4.500h-2M9 6.500v4M7.500 8.500h3M13 9l-2 2 2 2" />
      </svg>
    </button>
    <SmallCaret className="mt-1.5 fill-[#5d7188]" />
    <button type="button" aria-label="Вид на грань" className="mt-2">
      <svg width="17" height="16" viewBox="0 0 17 16" fill="none" stroke="currentColor">
        <path d="M1 5.500h15v10H1z" fill="#d4dce5" />
        <path d="M4.500 8.500h8v4h-8z" fill="#b8c5d4" />
        <path d="M3 3.500l3-2 2 1.500 3-1 3-1M8 3l2 1" />
      </svg>
    </button>
    <button type="button" aria-label="Настройка" className="mt-auto mb-0.5 self-end pr-0.5">
      <svg width="9" height="9" viewBox="0 0 9 9"><circle cx="4.500" cy="4.500" r="4" fill="#6e8199" /><path d="M2 4h5M3 6h3" stroke="#d5dde6" /></svg>
    </button>
  </div>
);

const Viewport = () => (
  <main className="relative min-w-0 flex-1 border-r-2 border-[#f2f5f8] bg-gradient-to-b from-[#37649b] via-[#6d8bb0] via-50% to-[#c1c2c0]">
    <div className="absolute inset-0"><Model /></div>
    <div className="absolute top-2 right-1 flex items-center gap-2.5">
      <button type="button" aria-label="Свернуть документ">
        <svg width="11" height="10" viewBox="0 0 11 10"><path d="M0 6h10v3H0z" fill="#fff" /></svg>
      </button>
      <button type="button" aria-label="Восстановить документ">
        <svg width="9" height="10" viewBox="0 0 9 10" fill="none" stroke="#fff">
          <path d="M3 1h5.500v6" strokeWidth="1.500" />
          <path d="M1 4h5v5H1z" strokeWidth="2" />
        </svg>
      </button>
      <button type="button" aria-label="Закрыть документ">
        <svg width="9" height="9" viewBox="0 0 9 9"><path d="M1 1l7 7M8 1L1 8" stroke="#fff" strokeWidth="2.400" /></svg>
      </button>
    </div>
    <div className="absolute top-10 right-4"><ViewCube /></div>
    <div className="absolute top-[126px] right-0.5"><NavBar /></div>
  </main>
);

/* ---------- status bar ---------- */

const StatusBar = () => (
  <footer className="mr-[7px] ml-px flex h-[27px] shrink-0 items-center border-t border-[#9aa0a6] bg-gradient-to-b from-white via-[#ececec] to-[#b9b9b9] text-[11px] text-black">
    <span className="flex-1 pl-0.5">Для вызова справки нажмите F1</span>
    <span className="h-full w-10 border-l border-[#c4c4c4] pl-2 leading-[26px]">1</span>
    <span className="h-full w-[38px] border-l border-[#c4c4c4] pl-2 leading-[26px]">1</span>
    <span className="flex h-full items-center border-l border-[#c4c4c4] pl-0.5">
      <span className="h-5 w-[15px] bg-[#049404]" />
      <span className="h-5 w-[21px] bg-gradient-to-b from-[#3a3a3a] to-black" />
    </span>
    <svg width="10" height="10" viewBox="0 0 10 10" className="mx-1 mt-3" fill="#fff">
      <path d="M8 0h2v2H8zM4 4h2v2H4zM8 4h2v2H8zM0 8h2v2H0zM4 8h2v2H4zM8 8h2v2H8z" />
    </svg>
  </footer>
);

const App = () => {
  const [active, setActive] = useState("3D-модель");

  return (
    <div className="flex h-screen flex-col border-x border-t-2 border-b-2 border-[#1b2b42] bg-gradient-to-r from-[#5b93c9] via-[#a9c8e6] to-[#8ba5c2] font-['Open_Sans','Noto_Sans',sans-serif]">
      <div className="-mt-0.5 flex min-h-0 flex-1 flex-col">
        <Header active={active} setActive={setActive} />
        <Ribbon />
        <div className="mr-[7px] ml-px flex min-h-0 flex-1">
          <ModelBrowser />
          <Viewport />
        </div>
        <StatusBar />
        <div className="h-[5px] shrink-0" />
      </div>
    </div>
  );
};

export default App;
